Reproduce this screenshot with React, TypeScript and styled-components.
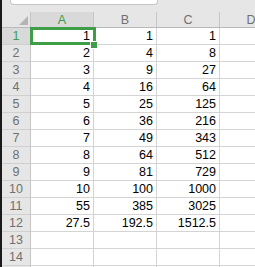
import React from "react";
import styled, { createGlobalStyle } from "styled-components";

const Global = createGlobalStyle`
  html, body { margin: 0; padding: 0; background: #ffffff; overflow: hidden; }
  * { box-sizing: border-box; }
`;

const GREEN = "#3e9e47";

const Page = styled.div`
  display: flex;
  width: 255px;
  height: 267px;
  overflow: hidden;
  font-family: "Liberation Sans", Arial, sans-serif;
`;

const LeftStrip = styled.div`
  width: 2px;
  flex: none;
  background: #1a1a1a;
`;

const Main = styled.div`
  flex: 1;
  display: flex;
  flex-direction: column;
  min-width: 0;
`;

const TopBar = styled.div`
  height: 12px;
  background: #e6e6e6;
  padding-left: 8px;
  flex: none;
`;

const NameBox = styled.div`
  width: 148px;
  height: 5px;
  background: #ffffff;
  border: 1px solid #c6c6c6;
  border-top: none;
  border-radius: 0 0 4px 4px;
`;

const Sheet = styled.div`
  display: grid;
  grid-template-columns: 29px repeat(4, 63px);
  grid-template-rows: 16px repeat(15, 17px);
`;

const Corner = styled.div`
  background: #e6e6e6;
  border-right: 1px solid #c6c6c6;
  border-bottom: 1px solid #b9b9b9;
  position: relative;
`;

const CornerTri = styled.svg`
  position: absolute;
  right: 2px;
  bottom: 2px;
`;

const ColHeader = styled.div<{ $sel?: boolean }>`
  background: ${(p) => (p.$sel ? "#d9d9d9" : "#e6e6e6")};
  border-right: 1px solid #c6c6c6;
  border-bottom: 1px solid #b9b9b9;
  color: ${(p) => (p.$sel ? GREEN : "#707070")};
  font-size: 12.5px;
  display: flex;
  align-items: center;
  justify-content: center;
  line-height: 1;
  padding-top: 1px;
`;

const RowHeader = styled.div<{ $sel?: boolean }>`
  background: ${(p) => (p.$sel ? "#d9d9d9" : "#e6e6e6")};
  border-right: 1px solid #c6c6c6;
  border-bottom: 1px solid #d0d0d0;
  color: ${(p) => (p.$sel ? GREEN : "#707070")};
  font-size: 12.5px;
  display: flex;
  align-items: flex-end;
  justify-content: center;
  line-height: 1;
  padding-bottom: 2px;
`;

const Cell = styled.div`
  background: #ffffff;
  border-right: 1px solid #d4d4d4;
  border-bottom: 1px solid #d4d4d4;
  color: #000000;
  font-size: 12.5px;
  display: flex;
  align-items: flex-end;
  justify-content: flex-end;
  line-height: 1;
  padding: 0 3px 2px 0;
`;

const ActiveCell = styled(Cell)`
  position: relative;
  z-index: 2;
`;

const Selection = styled.div`
  position: absolute;
  left: -1px;
  top: -1px;
  right: -3px;
  bottom: -1px;
  border: 3px solid ${GREEN};
  pointer-events: none;
`;

const FillHandle = styled.div`
  position: absolute;
  right: -5px;
  bottom: -5px;
  width: 8px;
  height: 8px;
  background: ${GREEN};
  border: 1px solid #ffffff;
`;

const data: (string | null)[][] = [
  ["1", "1", "1"],
  ["2", "4", "8"],
  ["3", "9", "27"],
  ["4", "16", "64"],
  ["5", "25", "125"],
  ["6", "36", "216"],
  ["7", "49", "343"],
  ["8", "64", "512"],
  ["9", "81", "729"],
  ["10", "100", "1000"],
  ["55", "385", "3025"],
  ["27.5", "192.5", "1512.5"],
  [null, null, null],
  [null, null, null],
  [null, null, null],
];

const cols = ["A", "B", "C", "D"];

export default function App() {
  return (
    <Page>
      <Global />
      <LeftStrip />
      <Main>
        <TopBar>
          <NameBox />
        </TopBar>
        <Sheet>
          <Corner>
            <CornerTri width="9" height="9" viewBox="0 0 9 9">
              <polygon points="9,0 9,9 0,9" fill="#b4b4b4" />
            </CornerTri>
          </Corner>
          {cols.map((c, i) => (
            <ColHeader key={c} $sel={i === 0}>
              {c}
            </ColHeader>
          ))}
          {data.map((row, r) => (
            <React.Fragment key={r}>
              <RowHeader $sel={r === 0}>{r < 14 ? r + 1 : ""}</RowHeader>
              {row.map((v, c) =>
                r === 0 && c === 0 ? (
                  <ActiveCell key={c}>
                    {v}
                    <Selection />
                    <FillHandle />
                  </ActiveCell>
                ) : (
                  <Cell key={c}>{v}</Cell>
                )
              )}
              <Cell />
            </React.Fragment>
          ))}
        </Sheet>
      </Main>
    </Page>
  );
}
